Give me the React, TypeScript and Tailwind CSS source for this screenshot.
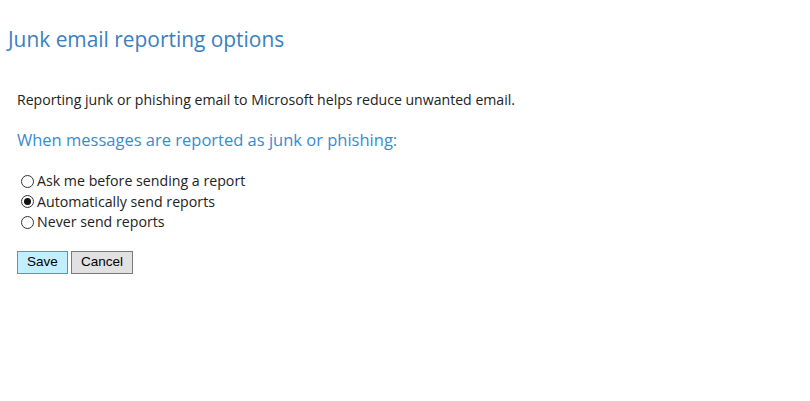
import React from "react";

function Radio({ checked }: { checked?: boolean }) {
  return (
    <span className="mr-[3px] flex h-[13px] w-[13px] shrink-0 items-center justify-center rounded-full border border-[#333] bg-white">
      {checked && <span className="h-[7px] w-[7px] rounded-full bg-[#111]" />}
    </span>
  );
}

export default function App() {
  const options = [
    { label: "Ask me before sending a report", checked: false },
    { label: "Automatically send reports", checked: true },
    { label: "Never send reports", checked: false },
  ];
  return (
    <div className="h-[401px] w-[810px] bg-white font-['Open_Sans',sans-serif] text-[#222]">
      <h1 className="pl-[8px] pt-[25px] text-[20.9px] font-normal leading-[28px] text-[#3a7fc1]">
        Junk email reporting options
      </h1>
      <div className="pl-[17px]">
        <p className="mt-[37px] text-[14.1px] leading-[20px]">
          Reporting junk or phishing email to Microsoft helps reduce unwanted email.
        </p>
        <h2 className="mt-[18px] text-[16.5px] leading-[24px] text-[#3a8ad0]">
          When messages are reported as junk or phishing:
        </h2>
        <div className="mt-[19px] flex flex-col text-[14.2px] leading-[20.5px]">
          {options.map((o) => (
            <label key={o.label} className="flex items-center pl-[4px]">
              <Radio checked={o.checked} />
              {o.label}
            </label>
          ))}
        </div>
        <div className="mt-[18px] flex gap-[3px] font-['Liberation_Sans',Arial,sans-serif] text-[13.5px] text-black">
          <button className="h-[23px] w-[51px] border border-[#3c9fd6] bg-[#c2efff] leading-none">
            Save
          </button>
          <button className="h-[23px] w-[62px] border border-[#7a7a7a] bg-[#e1e1e1] leading-none">
            Cancel
          </button>
        </div>
      </div>
    </div>
  );
}
